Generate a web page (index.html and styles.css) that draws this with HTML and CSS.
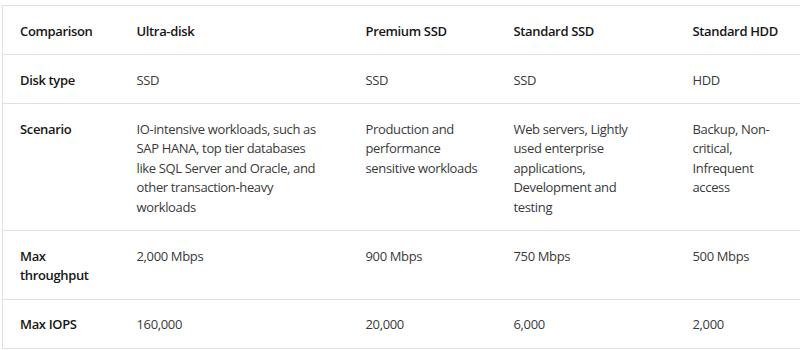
FILE: index.html
```html
<!DOCTYPE html>
<html>
<head>
<meta charset="utf-8">
<link rel="stylesheet" href="styles.css">
</head>
<body>
<div class="wrap">
<table class="cmp">
  <colgroup>
    <col class="c1"><col class="c2"><col class="c3"><col class="c4"><col class="c5">
  </colgroup>
  <thead>
    <tr><th>Comparison</th><th>Ultra-disk</th><th>Premium SSD</th><th>Standard SSD</th><th>Standard HDD</th></tr>
  </thead>
  <tbody>
    <tr><td class="lbl">Disk type</td><td>SSD</td><td>SSD</td><td>SSD</td><td>HDD</td></tr>
    <tr><td class="lbl">Scenario</td><td>IO-intensive workloads, such as SAP HANA, top tier databases like SQL Server and Oracle, and other transaction-heavy workloads</td><td>Production and performance sensitive workloads</td><td>Web servers, Lightly used enterprise applications, Development and testing</td><td>Backup, Non-critical, Infrequent access</td></tr>
    <tr><td class="lbl">Max throughput</td><td>2,000 Mbps</td><td>900 Mbps</td><td>750 Mbps</td><td>500 Mbps</td></tr>
    <tr><td class="lbl">Max IOPS</td><td>160,000</td><td>20,000</td><td>6,000</td><td>2,000</td></tr>
  </tbody>
</table>
</div>
</body>
</html>
```

FILE: styles.css
```css
html, body {
  margin: 0;
  padding: 0;
  background: #ffffff;
}
.wrap {
  padding: 5px 0 0 2px;
}
.cmp {
  width: 798px;
  table-layout: fixed;
  border-collapse: collapse;
  border: 1px solid #e1e1e1;
  font-family: "Open Sans", "Noto Sans", sans-serif;
  font-size: 13px;
  letter-spacing: -0.35px;
  line-height: 19.5px;
  color: #3a3a3a;
}
.c1 { width: 117px; }
.c2 { width: 229px; }
.c3 { width: 148px; }
.c4 { width: 179px; }
.c5 { width: 125px; }
.cmp th, .cmp td {
  text-align: left;
  vertical-align: top;
  padding: 15.75px 20px 12.75px 17px;
  border-bottom: 1px solid #e1e1e1;
}
.cmp td:nth-child(2) {
  padding-right: 26px;
}
.cmp td:nth-child(3) {
  padding-right: 15px;
}
.cmp th {
  font-weight: 600;
  color: #171717;
}
.cmp td.lbl {
  font-weight: 600;
  color: #171717;
}
```
